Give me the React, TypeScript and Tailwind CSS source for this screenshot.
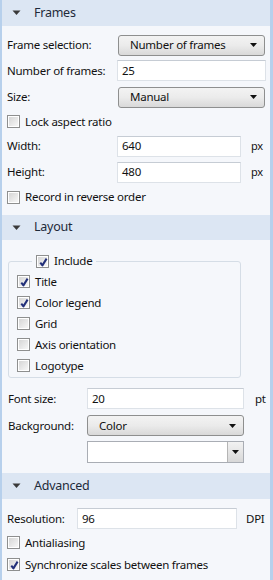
import React from "react";

const Tri = () => (
  <svg width="9" height="6" viewBox="0 0 9 6" className="shrink-0">
    <path d="M0.5 0.5 L8.5 0.5 L4.5 5 Z" fill="#3a3a3a" />
  </svg>
);

const SmallArrow = () => (
  <svg width="7" height="4" viewBox="0 0 7 4" className="shrink-0">
    <path d="M0 0 L7 0 L3.5 4 Z" fill="#111" />
  </svg>
);

const Header = ({ title, cls }: { title: string; cls: string }) => (
  <div className={`flex items-center bg-[#dce6f3] ${cls}`}>
    <div className="w-[32px] pl-[10px] flex items-center">
      <Tri />
    </div>
    <span className="text-[12.5px] text-[#1e2a3a]">{title}</span>
  </div>
);

const Check = ({ checked }: { checked?: boolean }) => (
  <div className="w-[13px] h-[13px] border border-[#8e8f8f] bg-white p-px shrink-0">
    <div className="w-full h-full bg-gradient-to-br from-[#d6d6d6] to-[#f7f7f7] relative">
      {checked && (
        <svg width="11" height="11" viewBox="0 0 11 11" className="absolute left-0 top-0">
          <path d="M2.3 5.6 L4.4 8.4 L8.6 1.6" stroke="#22307a" strokeWidth="2" fill="none" strokeLinejoin="round" />
        </svg>
      )}
    </div>
  </div>
);

const CheckRow = ({ label, checked, cls }: { label: string; checked?: boolean; cls: string }) => (
  <div className={`flex items-center gap-[5px] ${cls}`}>
    <Check checked={checked} />
    <span>{label}</span>
  </div>
);

const Select = ({ value, cls }: { value: string; cls: string }) => (
  <div
    className={`h-[21px] flex items-center justify-between rounded-[3px] border border-[#8e8f8f] bg-gradient-to-b from-[#f3f3f3] via-[#ebebeb] to-[#d9d9d9] pl-[11px] pr-[7px] ${cls}`}
  >
    <span>{value}</span>
    <SmallArrow />
  </div>
);

const Input = ({ value, cls }: { value: string; cls: string }) => (
  <div
    className={`h-[21px] flex items-center bg-white border border-[#dde2e8] border-t-[#c6ccd4] pl-[4px] ${cls}`}
  >
    {value}
  </div>
);

export default function App() {
  return (
    <div
      className="w-[273px] h-[580px] bg-[#f5f7fb] border-l-[2px] border-r-[3px] border-[#b7d0ec] flex flex-col text-[11.5px] tracking-[-0.25px] text-[#111] overflow-hidden"
      style={{ fontFamily: '"Noto Sans", "Open Sans", sans-serif' }}
    >
      <Header title="Frames" cls="h-[26px]" />
      <div className="flex flex-col pl-[5px] pt-[7px]">
        <div className="h-[24px] flex items-center">
          <span className="w-[111px]">Frame selection:</span>
          <Select value="Number of frames" cls="w-[147px]" />
        </div>
        <div className="h-[27px] flex items-center">
          <span className="w-[110px]">Number of frames:</span>
          <Input value="25" cls="w-[149px]" />
        </div>
        <div className="h-[26px] flex items-center">
          <span className="w-[111px]">Size:</span>
          <Select value="Manual" cls="w-[147px]" />
        </div>
        <CheckRow label="Lock aspect ratio" cls="h-[23px]" />
        <div className="h-[26px] flex items-center">
          <span className="w-[110px]">Width:</span>
          <Input value="640" cls="w-[124px]" />
          <span className="ml-[10px] text-[11px]">px</span>
        </div>
        <div className="h-[26px] flex items-center">
          <span className="w-[110px]">Height:</span>
          <Input value="480" cls="w-[124px]" />
          <span className="ml-[10px] text-[11px]">px</span>
        </div>
        <CheckRow label="Record in reverse order" cls="h-[24px]" />
      </div>
      <Header title="Layout" cls="h-[25px] mt-[6px]" />
      <div className="flex flex-col pl-[6px]">
        <fieldset className="w-[233px] mt-[11px] border border-[#d5dde6] rounded-[3px] pl-[8px] pb-[1px]">
          <legend className="ml-[15px] px-[4px]">
            <CheckRow label="Include" checked cls="h-[20px]" />
          </legend>
          <CheckRow label="Title" checked cls="h-[21px]" />
          <CheckRow label="Color legend" checked cls="h-[21px]" />
          <CheckRow label="Grid" cls="h-[21px]" />
          <CheckRow label="Axis orientation" cls="h-[21px]" />
          <CheckRow label="Logotype" cls="h-[21px]" />
        </fieldset>
        <div className="h-[27px] mt-[7px] flex items-center">
          <span className="w-[79px]">Font size:</span>
          <Input value="20" cls="w-[157px]" />
          <span className="ml-[11px]">pt</span>
        </div>
        <div className="h-[27px] flex items-center">
          <span className="w-[79px]">Background:</span>
          <Select value="Color" cls="w-[157px]" />
        </div>
        <div className="h-[25px] flex items-center">
          <span className="w-[79px]"></span>
          <div className="w-[157px] h-[22px] flex bg-white border border-[#a9adb4]">
            <div className="flex-1" />
            <div className="w-[16px] border-l border-[#b5b5b5] bg-gradient-to-b from-[#f2f2f2] to-[#d8d8d8] flex items-center justify-center">
              <SmallArrow />
            </div>
          </div>
        </div>
      </div>
      <Header title="Advanced" cls="h-[26px] mt-[9px]" />
      <div className="flex flex-col pl-[5px] pt-[7px]">
        <div className="h-[25px] flex items-center">
          <span className="w-[70px]">Resolution:</span>
          <Input value="96" cls="w-[160px]" />
          <span className="ml-[9px]">DPI</span>
        </div>
        <CheckRow label="Antialiasing" cls="h-[23px]" />
        <CheckRow label="Synchronize scales between frames" checked cls="h-[21px]" />
      </div>
    </div>
  );
}
